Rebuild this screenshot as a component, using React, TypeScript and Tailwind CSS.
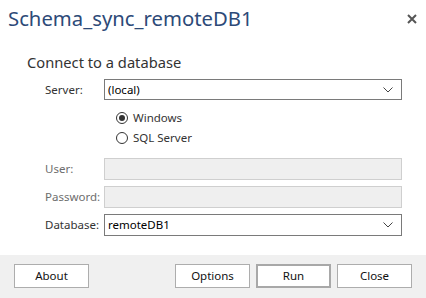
import { useState } from "react";

const Chevron = () => (
  <svg width="10" height="6" viewBox="0 0 10 6" className="text-[#444]">
    <path d="M0.5 0.5 L5 5 L9.5 0.5" fill="none" stroke="currentColor" strokeWidth="1" />
  </svg>
);

const Radio = ({ checked, label, onClick }: { checked: boolean; label: string; onClick: () => void }) => (
  <label className="flex items-center h-[20px] gap-[5px] cursor-default" onClick={onClick}>
    <span className="w-[12px] h-[12px] rounded-full border border-[#333] bg-white flex items-center justify-center">
      {checked && <span className="w-[6px] h-[6px] rounded-full bg-[#333]" />}
    </span>
    <span>{label}</span>
  </label>
);

const Btn = ({ label, primary }: { label: string; primary?: boolean }) => (
  <button
    className={
      "w-[75px] h-[24px] bg-white text-[11.5px] text-[#111] " +
      (primary ? "border-2 border-[#a8a8a8]" : "border border-[#adadad]")
    }
  >
    {label}
  </button>
);

export default function App() {
  const [auth, setAuth] = useState("windows");

  return (
    <div className="w-[426px] h-[298px] flex flex-col bg-white text-[11.5px] text-[#222] font-['Noto_Sans',sans-serif] overflow-hidden">
      <div className="flex items-start justify-between pl-[8px] pr-[9px] pt-[3px] h-[48px]">
        <div className="text-[20.3px] text-[#2d4a78] leading-[30px]">Schema_sync_remoteDB1</div>
        <svg width="10" height="10" viewBox="0 0 10 10" className="mt-[11px] text-[#555]">
          <path d="M1 1 L9 9 M9 1 L1 9" stroke="currentColor" strokeWidth="2" />
        </svg>
      </div>

      <div className="pl-[27px] text-[14.7px] leading-[20px] text-[#333] mt-[4px]">Connect to a database</div>

      <div className="flex flex-col pl-[45px] mt-[7px] text-[#333]">
        <div className="flex items-center h-[21px]">
          <span className="w-[59px]">Server:</span>
          <div className="w-[298px] h-[21px] border border-[#7a7a7a] flex items-center justify-between pl-[3px] pr-[8px] text-[#000]">
            <span>(local)</span>
            <Chevron />
          </div>
        </div>

        <div className="flex flex-col pl-[71px] mt-[8px] text-[#333]">
          <Radio checked={auth === "windows"} label="Windows" onClick={() => setAuth("windows")} />
          <Radio checked={auth === "sql"} label="SQL Server" onClick={() => setAuth("sql")} />
        </div>

        <div className="flex items-center h-[22px] mt-[10px]">
          <span className="w-[59px] text-[#6d6d6d]">User:</span>
          <div className="w-[298px] h-[22px] border border-[#cfcfcf] bg-[#efefef]" />
        </div>
        <div className="flex items-center h-[22px] mt-[6px]">
          <span className="w-[59px] text-[#6d6d6d]">Password:</span>
          <div className="w-[298px] h-[22px] border border-[#cfcfcf] bg-[#efefef]" />
        </div>
        <div className="flex items-center h-[22px] mt-[6px]">
          <span className="w-[59px]">Database:</span>
          <div className="w-[298px] h-[22px] border border-[#7a7a7a] flex items-center justify-between pl-[3px] pr-[8px] text-[#000]">
            <span>remoteDB1</span>
            <Chevron />
          </div>
        </div>
      </div>

      <div className="mt-auto h-[43px] bg-[#f0f0f0] flex items-center pl-[14px] pr-[14px] pb-[2px]">
        <Btn label="About" />
        <div className="ml-auto flex gap-[6px]">
          <Btn label="Options" />
          <Btn label="Run" primary />
          <Btn label="Close" />
        </div>
      </div>
    </div>
  );
}
